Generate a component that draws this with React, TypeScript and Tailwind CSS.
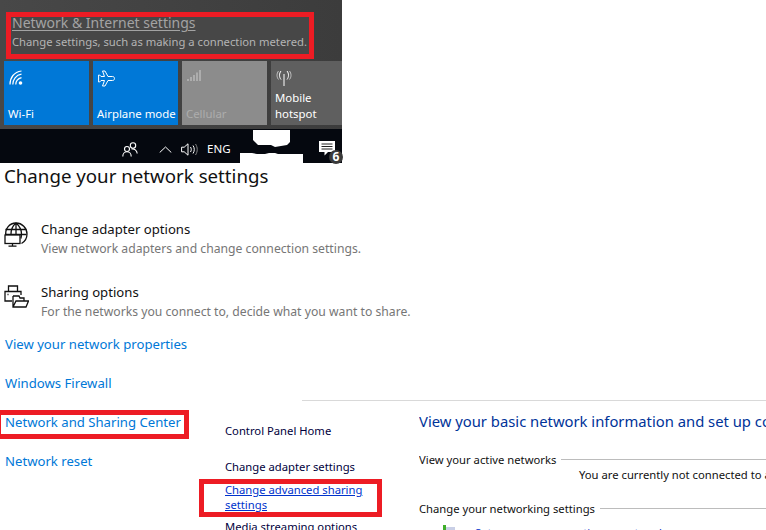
import React from "react"

const segoe = "font-['Noto_Sans','Open_Sans',sans-serif]"

const WifiIcon = () => (
  <svg width="14" height="15" viewBox="0 0 14 15" fill="none" stroke="#fff" strokeWidth="1.200">
    <path d="M1 14.500C1 7.500 5 2 12.500 1" />
    <path d="M3.800 14.500C3.800 9.500 7 5 12.500 4.200" />
    <path d="M6.800 14.500C6.800 11.500 9 8.500 12.500 7.600" />
    <circle cx="11.500" cy="13" r="1.800" fill="#fff" stroke="none" />
  </svg>
)

const PlaneIcon = () => (
  <svg width="17" height="17" viewBox="0 0 17 17" fill="none" stroke="#fff" strokeWidth="1">
    <path d="M4.500 1H7l3 5.500h4.500c1.400 0 2 1 2 2s-.6 2-2 2H10L7 16H4.500L6.500 10.500H3L1.600 12H.6V5h1L3 6.500h3.500z" />
  </svg>
)

const CellularIcon = () => (
  <svg width="15" height="11" viewBox="0 0 15 11" fill="#adadad">
    <rect x="0" y="9" width="2" height="2" />
    <rect x="3" y="7" width="2" height="4" />
    <rect x="6" y="5" width="2" height="6" />
    <rect x="9" y="2.500" width="2" height="8.500" />
    <rect x="12" y="0" width="2" height="11" />
  </svg>
)

const HotspotIcon = () => (
  <svg width="16" height="16" viewBox="0 0 16 16" fill="none" stroke="#fff" strokeWidth="1">
    <path d="M8 4v12" />
    <path d="M5 1C3 3.500 3 7 5 9.500" />
    <path d="M11 1c2 2.500 2 6 0 8.500" />
    <path d="M2.500 1C.5 3.500.5 7 2.500 9.500" opacity=".6" />
    <path d="M13.500 1c2 2.500 2 6 0 8.500" opacity=".6" />
  </svg>
)

const PeopleIcon = () => (
  <svg width="16" height="15" viewBox="0 0 16 15" fill="none" stroke="#fff" strokeWidth="1.100">
    <circle cx="11" cy="3.500" r="2.700" />
    <circle cx="5" cy="7" r="2.500" />
    <path d="M.8 14.500c0-2.500 1.700-4.700 4.200-4.700s4.200 2.200 4.200 4.700" />
    <path d="M9.500 7c2.800-.6 5.500 1.400 5.700 4.500" />
  </svg>
)

const SpeakerIcon = () => (
  <svg width="17" height="13" viewBox="0 0 17 13" fill="none" stroke="#fff" strokeWidth="1">
    <path d="M.6 4.200h2.600L7 .8v11.400L3.200 8.800H.6z" />
    <path d="M9.500 4c1 1.500 1 3.500 0 5" />
    <path d="M12 2.500c1.700 2.500 1.700 5.500 0 8" />
    <path d="M14.500 1c2.300 3.500 2.300 7.500 0 11" stroke="#888" />
  </svg>
)

const NotifyIcon = () => (
  <svg width="17" height="15" viewBox="0 0 17 15">
    <path d="M0 0h16v11H9l-3.500 3.500V11H0z" fill="#fff" />
    <path d="M2.500 3h11M2.500 5.500h11M2.500 8h11" stroke="#222" strokeWidth="1" />
  </svg>
)

const GlobeIcon = () => (
  <svg width="24" height="25" viewBox="0 0 24 25" fill="none" stroke="#111" strokeWidth="1.300">
    <path d="M2 14C.4 7 5.500 1 12 1c6 0 11 5 11 11 0 4-2 7.500-5.500 9.500" />
    <path d="M12 1c-3.500 3-5 6.500-5 11M12 1c3.500 3 5.500 7 5.500 11 0 1.500-.2 3-.6 4.500M12 1v12M1.500 7.500h21M1.500 12.500h21" />
    <rect x="1" y="13" width="15" height="8.500" fill="#fff" />
    <path d="M8.500 21.500v2.500M4.500 24.200h8" />
  </svg>
)

const SharingIcon = () => (
  <svg width="25" height="24" viewBox="0 0 25 24" fill="none" stroke="#111" strokeWidth="1.300">
    <path d="M4.500 6V1h9v5" />
    <path d="M8 16H1V6.500h16V10" />
    <path d="M3.500 9.500h1" />
    <path d="M9 11h6l1 2h4v3" fill="#fff" />
    <path d="M9 11v11h13l2.500-6H12l-3 6" fill="#fff" />
  </svg>
)

const Tile = ({
  label,
  icon,
  className,
  labelClass,
}: {
  label: string
  icon: React.ReactNode
  className: string
  labelClass?: string
}) => (
  <div className={`h-[64px] flex flex-col justify-between pl-[4px] pb-[3px] ${className}`}>
    <div className="h-[30px] pt-[9px] pl-[1px] flex items-start">{icon}</div>
    <div className={`text-[11.400px] leading-[16px] whitespace-pre ${labelClass ?? "text-white"}`}>{label}</div>
  </div>
)

const SettingRow = ({ icon, title, desc }: { icon: React.ReactNode; title: string; desc: string }) => (
  <div className="flex items-start">
    <div className="w-[41px] pl-[4px] pt-[2px] shrink-0">{icon}</div>
    <div>
      <div className="text-[13.150px] leading-[19px] text-[#111]">{title}</div>
      <div className="text-[12.200px] leading-[19px] text-[#767676]">{desc}</div>
    </div>
  </div>
)

export default function App() {
  return (
    <div className={`w-[766px] h-[530px] overflow-hidden bg-white ${segoe}`}>
      {/* Action center flyout */}
      <div className="w-[342px] relative">
        <div className="h-[129px] bg-gradient-to-r from-[#484848] to-[#3c3c3c] pt-[12px] overflow-hidden">
          <div className="ml-[6px] w-[308px] h-[47px] border-[5px] border-[#ed1c24] pl-[1px] bg-[#474747]">
            <div className="text-[14px] leading-[18px] -mt-[3px] text-[#a3a3a3] underline underline-offset-2">
              Network &amp; Internet settings
            </div>
            <div className="text-[11.250px] leading-[18px] mt-[1px] text-[#b4b4b4] whitespace-nowrap">
              Change settings, such as making a connection metered.
            </div>
          </div>
          <div className="flex gap-[4px] ml-[4px] mt-[2px]">
            <Tile className="w-[85px] bg-[#0078d7]" label="Wi-Fi" icon={<WifiIcon />} />
            <Tile className="w-[85px] bg-[#0078d7]" label="Airplane mode" icon={<PlaneIcon />} />
            <Tile
              className="w-[85px] bg-[#8c8c8c]"
              label="Cellular"
              labelClass="text-[#adadad]"
              icon={<CellularIcon />}
            />
            <Tile className="w-[71px] bg-[#5f5f5f]" label={"Mobile\nhotspot"} icon={<HotspotIcon />} />
          </div>
        </div>

        {/* Taskbar */}
        <div className="h-[34px] bg-[#05080f] relative flex items-center pt-[6px]">
          <div className="ml-[122px]">
            <PeopleIcon />
          </div>
          <svg className="ml-[21px]" width="13" height="7" viewBox="0 0 13 7" fill="none" stroke="#fff" strokeWidth="1">
            <path d="M.7 6.500L6.500 1l5.800 5.500" />
          </svg>
          <div className="ml-[9px]">
            <SpeakerIcon />
          </div>
          <span className="ml-[9px] text-[11.500px] text-white">ENG</span>
          <div className="absolute left-[319px] top-[12px]">
            <NotifyIcon />
          </div>
          <div className="absolute left-[329px] top-[21px] w-[14px] h-[14px] rounded-full bg-[#3a3a3a] text-white text-[12px] font-bold leading-[14px] text-center">
            6
          </div>
          {/* redacted clock */}
          <svg className="absolute left-[240px] top-0" width="64" height="34" viewBox="0 0 64 34" fill="#fff">
            <path d="M13 1h37v12l-3 3-12 2-4-2H18l-5-5z" />
            <path d="M0 24h12l5 1h8l4-1h6l3 1h25v9H0z" />
          </svg>
        </div>
      </div>

      {/* Settings page */}
      <h1 className="text-[18.700px] leading-[26px] pl-[4px] text-[#111] font-normal">
        Change your network settings
      </h1>
      <div className="mt-[31px]">
        <SettingRow
          icon={<GlobeIcon />}
          title="Change adapter options"
          desc="View network adapters and change connection settings."
        />
      </div>
      <div className="mt-[25px]">
        <SettingRow
          icon={<SharingIcon />}
          title="Sharing options"
          desc="For the networks you connect to, decide what you want to share."
        />
      </div>
      <div className="text-[13.150px] leading-[20px] text-[#0078d7] pl-[5px] mt-[13px]">View your network properties</div>

      <div className="flex mt-[19px]">
        <div className="w-[199px] shrink-0 text-[13.150px] leading-[20px] text-[#0078d7]">
          <div className="pl-[5px]">Windows Firewall</div>
          <div className="mt-[17px] w-[189px] h-[29px] border-[5px] border-l-[1px] border-[#ed1c24] pl-[4px] leading-[19px] whitespace-nowrap">
            <div className="-mt-[2px]">Network and Sharing Center</div>
          </div>
          <div className="pl-[5px] mt-[12px]">Network reset</div>
        </div>

        {/* Control panel window */}
        <div className="flex-1 pt-[27px]">
          <div className="ml-[103px] h-[1px] bg-[#d9d9d9]" />
          <div className="flex">
            <div className="w-[220px] shrink-0 text-[11.250px] leading-[15px] text-[#00003c]">
              <div className="pl-[26px] mt-[22px]">Control Panel Home</div>
              <div className="pl-[26px] mt-[21px]">Change adapter settings</div>
              <div className="mt-[5px] w-[183px] h-[38px] border-[5px] border-[#ed1c24] pl-[21px] text-[#0033cc] underline">
                <div className="-mt-[2px] whitespace-nowrap">Change advanced sharing</div>
                <div>settings</div>
              </div>
              <div className="pl-[26px] mt-[2px] whitespace-nowrap">Media streaming options</div>
            </div>
            <div className="flex-1 min-w-0 text-[11.250px] leading-[15px] text-[#111] whitespace-nowrap overflow-hidden">
              <div className="text-[14.800px] leading-[20px] text-[#003399] mt-[10px]">
                View your basic network information and set up connections
              </div>
              <div className="flex items-center gap-[5px] mt-[21px]">
                <span>View your active networks</span>
                <div className="flex-1 h-[1px] bg-[#bcbcbc]" />
              </div>
              <div className="pl-[160px]">You are currently not connected to any networks.</div>
              <div className="flex items-center gap-[5px] mt-[19px]">
                <span>Change your networking settings</span>
                <div className="flex-1 h-[1px] bg-[#bcbcbc]" />
              </div>
              <div className="flex items-start ml-[24px] mt-[9px]">
                <div className="w-[3px] h-[8px] bg-[#3fae2a]" />
                <div className="w-[9px] h-[8px] mt-[2px] bg-[#c9cfe6]" />
                <div className="ml-[20px] mt-[0px] text-[#0033cc]">Set up a new connection or network</div>
              </div>
            </div>
          </div>
        </div>
      </div>
    </div>
  )
}
